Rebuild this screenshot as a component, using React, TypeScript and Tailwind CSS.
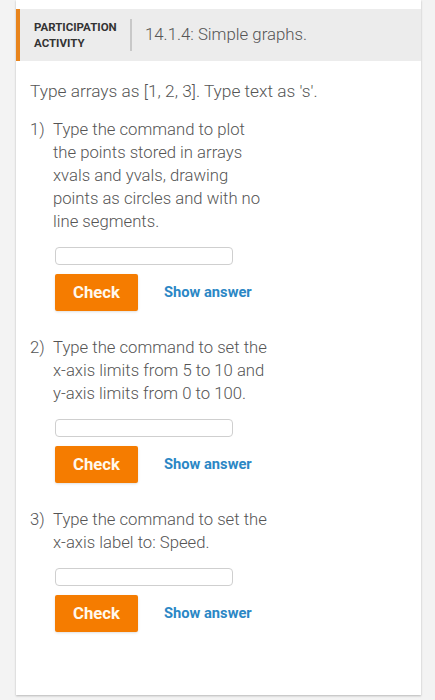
const questions = [
  {
    n: '1)',
    lines: ['Type the command to plot', 'the points stored in arrays', 'xvals and yvals, drawing', 'points as circles and with no', 'line segments.'],
  },
  {
    n: '2)',
    lines: ['Type the command to set the', 'x-axis limits from 5 to 10 and', 'y-axis limits from 0 to 100.'],
  },
  {
    n: '3)',
    lines: ['Type the command to set the', 'x-axis label to: Speed.'],
  },
]

function Question({ n, lines }: { n: string; lines: string[] }) {
  return (
    <div className="flex text-[16.7px]">
      <div className="w-[23px] shrink-0">{n}</div>
      <div>
        <p>
          {lines.map((l, i) => (
            <span key={i} className="block">{l}</span>
          ))}
        </p>
        <input
          type="text"
          className="mt-[14px] ml-[2px] block h-[18px] w-[178px] rounded-[4px] border border-[#cfcfcf] bg-white outline-none"
        />
        <div className="mt-[9px] ml-[2px] flex items-center">
          <button className="h-[37px] w-[83px] rounded-[2px] bg-[#f57c00] text-[16.7px] font-bold text-[#fff8ec] shadow-sm">
            Check
          </button>
          <button className="ml-[26px] text-[14.7px] font-bold text-[#2b87c5]">Show answer</button>
        </div>
      </div>
    </div>
  )
}

export default function App() {
  return (
    <div className="h-[700px] w-full overflow-hidden bg-[#f3f3f3] pl-[16px]" style={{ fontFamily: 'Roboto, "Liberation Sans", sans-serif' }}>
      <div className="h-[695px] w-[405px] bg-white pt-[9px] shadow-[0_1px_2px_rgba(0,0,0,0.25)]">
        <div className="flex h-[52px] items-center border-l-[4px] border-[#e8841c] bg-[#ececec] pr-2">
          <div className="w-[110px] shrink-0 pl-[14px] text-[11.5px] font-bold uppercase leading-[16px] text-[#333]">
            Participation
            <br />
            Activity
          </div>
          <div className="h-[32px] w-[2px] bg-[#c8c8c8]" />
          <div className="ml-[13px] text-[16.8px] font-light text-[#555]">14.1.4: Simple graphs.</div>
        </div>
        <div className="pl-[14px] font-light leading-[23px] text-[#555]">
          <p className="mt-[19px] text-[17.3px]">Type arrays as [1, 2, 3]. Type text as 's'.</p>
          <div className="mt-[15px] flex flex-col gap-[25px]">
            {questions.map((q) => (
              <Question key={q.n} n={q.n} lines={q.lines} />
            ))}
          </div>
        </div>
      </div>
    </div>
  )
}
